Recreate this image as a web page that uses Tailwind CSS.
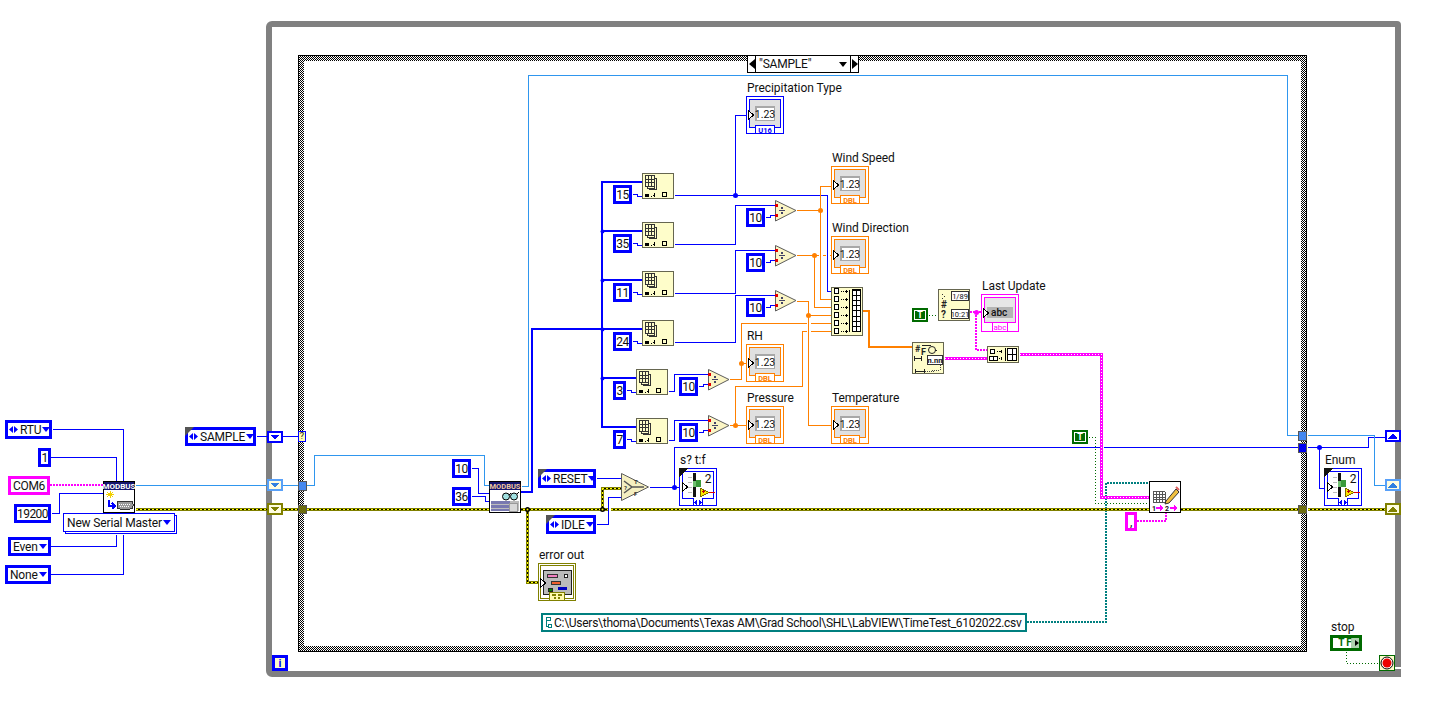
<!DOCTYPE html>
<html>
  <head>
    <meta charset="UTF-8" />
    <meta name="viewport" content="width=device-width, initial-scale=1.0" />
    <script src="https://cdn.jsdelivr.net/npm/@tailwindcss/browser@4"></script>
  </head>

  <body class="bg-white overflow-hidden font-['Roboto',sans-serif] text-[#111] text-[12px]">
    <div id="canvas" class="relative w-[1438px] h-[716px] overflow-hidden">
      <!-- while loop -->
      <div class="absolute left-[266px] top-[21px] w-[1135px] h-[656px] border-[6px] border-[#808080] rounded-tl-[6px] rounded-bl-[6px] rounded-tr-[4px] bg-white p-[28px_88px_19px_26px]">
        <!-- case structure -->
        <div class="w-full h-full border border-black bg-[repeating-conic-gradient(#000_0_25%,#fff_0_50%)] bg-[length:2px_2px] p-[5px]">
          <div class="w-full h-full bg-white"></div>
        </div>
      </div>
      <div class="absolute left-[1395px] top-[667px] w-[6px] h-[2px] bg-white"></div>

      <!-- case selector -->
      <div class="absolute left-[747px] top-[55px] w-[112px] h-[18px] border border-black bg-white flex items-center">
        <div class="w-[8px] h-full border-r border-black flex items-center justify-center">
          <div class="w-0 h-0 border-y-[5px] border-y-transparent border-r-[6px] border-r-black"></div>
        </div>
        <div class="flex-1 pl-[3px] leading-none text-[12px] tracking-[-0.2px]">"SAMPLE"</div>
        <div class="w-0 h-0 mr-[3px] border-x-[4px] border-x-transparent border-t-[5px] border-t-black"></div>
        <div class="w-[8px] h-full border-l border-black flex items-center justify-center">
          <div class="w-0 h-0 border-y-[5px] border-y-transparent border-l-[6px] border-l-black"></div>
        </div>
      </div>

      <svg id="wires" class="absolute inset-0" width="1438" height="716"></svg>
      <div id="nodes"></div>
    </div>

    <script>
      const BLUE = "#0000ff", LIGHT = "#2f96ee", ORANGE = "#ff8000", PINK = "#ff00ff", GREEN = "#006a00", TEAL = "#007f7f", OLIVE = "#808000";
      const PALE = "#fefdca";

      function wire(a, color, w, dash) {
        const off = w % 2 ? 0.5 : 0;
        const p = a.map((v) => v + off).join(" ");
        return `<polyline points="${p}" fill="none" stroke="${color}" stroke-width="${w}" ${dash ? `stroke-dasharray="${dash}"` : ""} shape-rendering="crispEdges"/>`;
      }
      const thin = (a) => wire(a, BLUE, 1);
      const light = (a) => wire(a, LIGHT, 1);
      const thick = (a) => wire(a, BLUE, 2);
      const org = (a) => wire(a, ORANGE, 1);
      const err = (a) =>
        wire(a, OLIVE, 3) + wire(a, "#000", 1) + wire(a, "#ffff00", 1, "2 2");
      const str = (a) => wire(a, PINK, 2, "2 1");
      const strArr = (a) => wire(a, PINK, 3) + wire(a, "#fff", 1, "1 2");
      const bool = (a) => wire(a, GREEN, 1, "1 2");
      const path = (a) => wire(a, TEAL, 2, "2 1");
      const dot = (x, y, c, r) => `<circle cx="${x + 0.5}" cy="${y + 0.5}" r="${r}" fill="${c}"/>`;

      let w = "";
      w += path([1027, 622, 1106, 622, 1106, 483, 1149, 483]);
      // left side constants
      [
        [52, 429, 123, 429, 123, 481],
        [50, 457, 116, 457, 116, 481],
        [51, 513, 59, 513, 59, 493, 103, 493],
        [50, 546, 116, 546, 116, 534],
        [50, 574, 123, 574, 123, 534],
        [256, 436, 267, 436],
        [282, 436, 298, 436],
        [1307, 447, 1368, 447, 1368, 437, 1385, 437],
        [674, 487, 674, 447, 1100, 447],
        [1103, 447, 1298, 447],
        [649, 487, 680, 487],
        [1319, 447, 1319, 488, 1327, 488],
        // index array outputs
        [674, 195, 827, 195, 827, 291, 831, 291],
        [735, 195, 735, 115, 747, 115],
        [674, 244, 735, 244, 735, 205, 775, 205],
        [674, 293, 735, 293, 735, 250, 775, 250],
        [674, 342, 735, 342, 735, 295, 775, 295],
        [668, 391, 674, 391, 674, 374, 708, 374],
        [668, 440, 674, 440, 674, 420, 708, 420],
        // index constants
        [632, 194, 637, 194, 637, 196, 642, 196],
        [632, 243, 637, 243, 637, 245, 642, 245],
        [632, 292, 637, 292, 637, 294, 642, 294],
        [632, 341, 637, 341, 637, 343, 642, 343],
        [626, 390, 631, 390, 631, 392, 636, 392],
        [626, 439, 631, 439, 631, 441, 636, 441],
        // divisors
        [765, 217, 770, 217, 770, 215, 775, 215],
        [765, 262, 770, 262, 770, 260, 775, 260],
        [765, 307, 770, 307, 770, 305, 775, 305],
        [698, 386, 703, 386, 703, 384, 708, 384],
        [698, 432, 703, 432, 703, 430, 708, 430],
        // modbus read
        [471, 468, 478, 468, 478, 493, 489, 493],
        [471, 496, 485, 496, 485, 501, 489, 501],
        [596, 478, 621, 478],
        [596, 524, 608, 524, 608, 497, 621, 497],
      ].forEach((a) => (w += thin(a)));
      [
        [135, 485, 267, 485],
        [282, 485, 299, 485],
        [306, 485, 314, 485, 314, 455, 484, 455, 484, 485, 489, 485],
        [521, 486, 528, 486, 528, 75, 1287, 75, 1287, 435, 1298, 435],
        [1307, 435, 1374, 435, 1374, 485, 1385, 485],
      ].forEach((a) => (w += light(a)));
      [
        [521, 492, 532, 492, 532, 329, 642, 329],
        [642, 182, 602, 182, 602, 427, 636, 427],
        [602, 231, 642, 231],
        [602, 280, 642, 280],
        [602, 378, 636, 378],
      ].forEach((a) => (w += thick(a)));
      [
        [796, 210, 820, 210],
        [833, 186, 820, 186, 820, 299, 831, 299],
        [796, 255, 818, 255],
        [822, 255, 825, 255],
        [829, 255, 833, 255],
        [814, 255, 814, 307, 831, 307],
        [796, 301, 808, 301, 808, 425, 833, 425],
        [808, 315, 831, 315],
        [729, 379, 741, 379, 741, 323, 806, 323],
        [810, 323, 831, 323],
        [741, 363, 747, 363],
        [729, 425, 747, 425],
        [735, 425, 735, 386, 802, 386, 802, 331, 806, 331],
        [810, 331, 831, 331],
      ].forEach((a) => (w += org(a)));
      w += wire([863, 311, 869, 311, 869, 347, 912, 347], ORANGE, 2);
      w += err([135, 509, 267, 509]) + err([282, 509, 298, 509]) + err([306, 509, 607, 509]) + err([610, 509, 1298, 509]) + err([1307, 509, 1385, 509]);
      w += err([527, 509, 527, 582, 540, 582]) + err([602, 509, 602, 488, 621, 488]);
      w += str([50, 485, 103, 485]) + str([970, 312, 982, 312]) + str([976, 312, 976, 350, 987, 350]) + str([1137, 521, 1166, 521, 1166, 513]);
      w += strArr([944, 358, 987, 358]) + strArr([1019, 354, 1101, 354, 1101, 497, 1149, 497]);
      w += bool([928, 315, 938, 315]) + bool([1088, 437, 1095, 437, 1095, 503, 1149, 503]) + bool([1346, 651, 1346, 663, 1379, 663]);
      [[602, 231], [602, 280], [602, 329], [602, 378], [735, 195], [674, 487], [1319, 447]].forEach((d) => (w += dot(d[0], d[1], BLUE, d[0] == 602 ? 2 : 2.5)));
      [[820, 210], [814, 255], [808, 315], [741, 363], [735, 425]].forEach((d) => (w += dot(d[0], d[1], ORANGE, 2.5)));
      w += dot(527, 509, "#000", 2.5) + dot(527, 509, "#ff0", 1) + dot(602, 509, "#000", 2.5) + dot(602, 509, "#ff0", 1) + dot(976, 312, PINK, 2.5);
      document.getElementById("wires").innerHTML = w;

      const place = (x, y, wd, h, cls, inner) =>
        `<div class="absolute ${cls}" style="left:${x}px;top:${y}px;width:${wd}px;height:${h}px">${inner || ""}</div>`;
      const svg = (wd, h, inner) =>
        `<svg class="block" width="${wd}" height="${h}" viewBox="0 0 ${wd} ${h}" shape-rendering="crispEdges">${inner}</svg>`;

      const num = (x, y, wd, txt) =>
        place(x, y, wd, 19, "border-[3px] border-[#0000ff] bg-white flex items-center justify-center text-[12px] tracking-[-0.5px] leading-none whitespace-nowrap", txt);
      const strConst = (x, y, wd, txt) =>
        place(x, y, wd, 19, "border-[3px] border-[#ff00ff] bg-white flex items-center justify-center text-[12px] tracking-[-0.3px] leading-none whitespace-nowrap", txt);
      const label = (x, y, txt) =>
        place(x, y - 8, 120, 16, "leading-[16px] text-[12px] tracking-[-0.05px] whitespace-nowrap", txt);

      const enumArrows = `<svg class="shrink-0" width="9" height="7" viewBox="0 0 9 7"><path d="M0 3.5 4 0v7zM9 3.5 5 0v7z" fill="#0000ff"/></svg>`;
      const enumDown = `<div class="w-0 h-0 shrink-0 border-x-[4px] border-x-transparent border-t-[5px] border-t-[#0000ff]"></div>`;
      const corner = `<div class="absolute -left-[3px] -top-[3px] w-0 h-0 border-r-[9px] border-r-transparent border-t-[9px] border-t-[#555]"></div>`;
      const enumC = (x, y, wd, txt, typed, noArrows) =>
        place(x, y, wd, 19, "border-[3px] border-[#0000ff] bg-white flex items-center pl-[1px] pr-[2px] gap-[1px] text-[12px] tracking-[-0.2px] leading-none whitespace-nowrap",
          (typed ? corner : "") + (noArrows ? "" : enumArrows) + `<span class="flex-1 pl-[1px]">${txt}</span>` + enumDown);

      // indicator terminal, 38x38
      function indicator(x, y, c, tag, tagColor) {
        return place(x, y, 38, 38, "", svg(38, 38,
          `<rect x="0.5" y="0.5" width="37" height="37" fill="#fff" stroke="${c}"/>
           <rect x="3.5" y="3.5" width="31" height="28" fill="#e0e0e0" stroke="${c}"/>
           <rect x="9" y="10" width="20" height="15" fill="#a8a8a8"/>
           <rect x="10.5" y="11.5" width="17" height="12" fill="#fff"/>
           <text x="19" y="21.5" text-anchor="middle" font-size="10.5" font-family="Roboto" fill="#111" shape-rendering="auto">1.23</text>
           <rect x="9.5" y="29.5" width="19" height="8" fill="#fff" stroke="${c}"/>
           <text x="19" y="36.5" text-anchor="middle" font-size="7.5" font-weight="700" font-family="Roboto" fill="${tagColor || c}" shape-rendering="auto">${tag}</text>
           <path d="M2.5 14.5v9l5-4.5z" fill="#fff" stroke="#000"/>`));
      }

      // index array node, 32x26
      function indexNode(x, y) {
        let grid = "";
        for (let i = 0; i <= 3; i++) grid += `<path d="M${3 + i * 3} 2.5v11M3 ${2.5 + i * 3.7}h9" stroke="#333" fill="none"/>`;
        return place(x, y, 32, 26, "", svg(32, 26,
          `<rect x="0.5" y="0.5" width="31" height="25" fill="${PALE}" stroke="#666650"/>
           <rect x="7.5" y="5.5" width="7" height="11" fill="${PALE}" stroke="#333"/>
           <rect x="5.5" y="4.5" width="7" height="11" fill="${PALE}" stroke="#333"/>
           <rect x="3.5" y="2.5" width="9" height="11" fill="${PALE}" stroke="#333"/>
           ${grid}
           <rect x="3" y="21" width="4" height="3" fill="#000"/>
           <path d="M9 23.5h1M11 22.5h2M12 20v4" stroke="#000"/>
           <rect x="20.5" y="19.5" width="4" height="4" fill="none" stroke="#000"/>`));
      }

      // divide node, 21x21
      function divide(x, y) {
        return place(x, y, 22, 22, "", svg(22, 22,
          `<path d="M0.5 0.5 21 10.5 0.5 21z" fill="#fbf5c4" stroke="#5c5c5c" shape-rendering="auto"/>
           <path d="M4 10.5h6" stroke="#446"/>
           <rect x="6" y="7" width="2" height="2" fill="#446"/>
           <rect x="6" y="12" width="2" height="2" fill="#446"/>
           <rect x="0" y="4" width="3" height="3" fill="#e00000"/>
           <rect x="0" y="14" width="3" height="3" fill="#e00000"/>`));
      }

      // structure terminals
      function srTerm(x, y, c, fill, tri, up) {
        const p = up ? "M3 8.5 7.5 3.5 12 8.5z" : "M3 3.5 7.5 8.5 12 3.5z";
        return place(x, y, 16, 12, "", svg(16, 12,
          `<rect x="1" y="1" width="14" height="10" fill="${fill}" stroke="${c}" stroke-width="2"/><path d="${p}" fill="${tri}" transform="translate(0.5 0)"/>`));
      }

      // enum case indicator, 38x38
      function enumInd(x, y) {
        return place(x, y, 38, 38, "", svg(38, 38,
          `<rect x="0.5" y="0.5" width="37" height="37" fill="#fff" stroke="#0000ff"/>
           <path d="M3.5 3.5h31v27h-11v7h-9v-7h-11z" fill="none" stroke="#0000ff"/>
           <rect x="14" y="5" width="3" height="24" fill="#111"/>
           <path d="M9 9h4M9 14h4M9 19h4M9 24h4" stroke="#bbb"/>
           <rect x="17" y="12" width="5" height="7" fill="#3a9a3a"/>
           <rect x="14" y="13" width="3" height="6" fill="#70c070"/>
           <path d="M0 0h9L0 9z" fill="#111"/>
           <path d="M3.5 14.5v9l5-4.5z" fill="#fff" stroke="#000"/>
           <text x="29" y="15" text-anchor="middle" font-size="12" font-family="Roboto" fill="#111" shape-rendering="auto">2</text>
           <path d="M21 20l9 4.5-9 4.5z" fill="#ffe800" stroke="#7a6a00"/>
           <path d="M30 24h6" stroke="#e00000"/>
           <path d="M23 23h3M24 22v3" stroke="#c00000"/>
           <path d="M14 34.5 18 32v5zM24 34.5 20 32v5z" fill="#0000ff"/>`));
      }

      function modbusNew(x, y) {
        return place(x, y, 32, 32, "", svg(32, 32,
          `<rect x="0.5" y="0.5" width="31" height="31" fill="#fff" stroke="#000"/>
           <rect x="1" y="1" width="30" height="8" fill="#14146e"/>
           <text x="16" y="8" text-anchor="middle" font-size="8" font-weight="700" font-family="Roboto" fill="#ffffff" shape-rendering="auto">MODBUS</text>
           <path d="M3 13h8M7 10v7M4 11l6 5M10 11l-6 5" stroke="#f2d000"/>
           <path d="M6 19v6h5M9 22l3 3-3 3" fill="none" stroke="#0000ff" stroke-width="2"/>
           <rect x="14" y="20" width="16" height="8" rx="3" fill="#9a9a9a" stroke="#333"/>
           <path d="M16 23h12M17 25h10" stroke="#fff" stroke-dasharray="1 1"/>`));
      }
      function modbusRead(x, y) {
        return place(x, y, 32, 32, "", svg(32, 32,
          `<rect x="0.5" y="0.5" width="31" height="31" fill="#fff" stroke="#000"/>
           <rect x="1" y="1" width="30" height="8" fill="#14146e"/>
           <text x="16" y="8" text-anchor="middle" font-size="7.5" font-weight="700" font-family="Roboto" fill="#f0c8a0" shape-rendering="auto">MODBUS</text>
           <circle cx="17" cy="15.5" r="3.5" fill="#a0e0e0" stroke="#000" shape-rendering="auto"/>
           <circle cx="25" cy="15.5" r="3.5" fill="#a0e0e0" stroke="#000" shape-rendering="auto"/>
           <path d="M20 14l2-2M28 13l2-2" stroke="#000"/>
           <rect x="2" y="20" width="28" height="10" fill="#bcbcbc"/>
           <rect x="2" y="20" width="19" height="3" fill="#7878b0"/>
           <rect x="2" y="24" width="19" height="3" fill="#7878b0"/>
           <rect x="2" y="28" width="19" height="2" fill="#7878b0"/>
           <rect x="20" y="22" width="8" height="8" fill="#d8d8d8" stroke="#999"/>`));
      }
      function selectNode(x, y) {
        return place(x, y, 28, 28, "", svg(28, 28,
          `<path d="M0.5 0.5 27.5 14 0.5 27.5z" fill="#f5efc0" stroke="#5c5c5c" shape-rendering="auto"/>
           <path d="M3 8l8 6-8 6M11 14h12" fill="none" stroke="#555" stroke-width="1.5" shape-rendering="auto"/>
           <text x="13" y="10.5" font-size="6" font-weight="700" font-family="Roboto" fill="#333" shape-rendering="auto">T</text>
           <text x="13" y="23" font-size="6" font-weight="700" font-family="Roboto" fill="#333" shape-rendering="auto">F</text>
           <text x="3" y="16.5" font-size="6" font-weight="700" font-family="Roboto" fill="#333" shape-rendering="auto">?</text>`));
      }
      function errorOut(x, y) {
        return place(x, y, 38, 38, "", svg(38, 38,
          `<rect x="0.5" y="0.5" width="37" height="37" fill="#fff" stroke="${OLIVE}"/>
           <rect x="2.5" y="2.5" width="33" height="33" fill="#fff" stroke="${OLIVE}"/>
           <rect x="5.5" y="7.5" width="28" height="24" fill="#bbb" stroke="#222"/>
           <rect x="9" y="11" width="10" height="3" fill="#f080c0" stroke="#333"/>
           <rect x="26.5" y="11.5" width="3" height="3" fill="#fff" stroke="#222"/>
           <rect x="13" y="18" width="9" height="3" fill="#f06030" stroke="#333"/>
           <rect x="20" y="24" width="9" height="3" fill="#0000c0"/>
           <rect x="10" y="25" width="4" height="3" fill="#008000" stroke="#222"/>
           <rect x="11.5" y="29.5" width="15" height="8" fill="#fff9b0" stroke="${OLIVE}"/>
           <path d="M14 32h4M20 32h4M16 35h2M20 35h2" stroke="${OLIVE}" stroke-width="2"/>
           <path d="M2.5 15.5v9l5-4.5z" fill="#fff" stroke="#000"/>`));
      }
      function builder(x, y) {
        let rows = "";
        for (let i = 0; i < 6; i++) {
          const ry = 4 + i * 8;
          rows += `<rect x="3.5" y="${ry - 2.5}" width="4" height="5" fill="#fff" stroke="#000"/><path d="M10 ${ry}h1M12 ${ry}h1M14 ${ry}h3M15.5 ${ry - 1}v3" stroke="#000"/>`;
        }
        let grid = "";
        for (let i = 0; i < 9; i++) grid += `<path d="M21 ${3 + i * 5.2}h8" stroke="#000"/>`;
        return place(x, y, 32, 49, "", svg(32, 49,
          `<rect x="0.5" y="0.5" width="31" height="48" fill="${PALE}" stroke="#666650"/>${rows}
           <path d="M18.5 3v42" stroke="#000"/><rect x="21.5" y="2.5" width="8" height="42" fill="#fff" stroke="#000"/>
           <path d="M25.5 3v41" stroke="#000"/>${grid}`));
      }
      function timeNode(x, y) {
        return place(x, y, 32, 32, "", svg(32, 32,
          `<rect x="0.5" y="0.5" width="31" height="31" fill="${PALE}" stroke="#666650"/>
           <rect x="13.5" y="2.5" width="17" height="9" fill="#fff" stroke="#333"/>
           <text x="22" y="10" text-anchor="middle" font-size="7.5" font-family="Roboto" fill="#111" shape-rendering="auto">1/89</text>
           <rect x="13.5" y="20.5" width="17" height="9" fill="#fff" stroke="#333"/>
           <text x="22" y="28" text-anchor="middle" font-size="7.5" font-family="Roboto" fill="#111" shape-rendering="auto">10:21</text>
           <path d="M4 5v1M6 7h1M4 9v1" stroke="#333"/>
           <text x="3" y="19" font-size="10" font-weight="700" font-family="Roboto" fill="#222" shape-rendering="auto">#</text>
           <text x="3" y="29" font-size="10" font-weight="700" font-family="Roboto" fill="#222" shape-rendering="auto">?</text>`));
      }
      function formatNode(x, y) {
        return place(x, y, 32, 32, "", svg(32, 32,
          `<rect x="0.5" y="0.5" width="31" height="31" fill="${PALE}" stroke="#666650"/>
           <text x="3" y="10" font-size="9" font-weight="700" font-family="Roboto" fill="#222" shape-rendering="auto">#</text>
           <text x="9" y="13" font-size="9" font-weight="700" font-family="Roboto" fill="#222" shape-rendering="auto">F</text>
           <path d="M10 3h9" stroke="#222"/>
           <circle cx="20" cy="8" r="3.5" fill="none" stroke="#222" shape-rendering="auto"/>
           <path d="M23 8l1 2 1-2z" fill="#222"/>
           <path d="M2 14v5M9 14v5M2 16.5h7M3 27v4M12 27v4M3 29h9" stroke="#222"/>
           <rect x="15.5" y="13.5" width="15" height="9" fill="#fff" stroke="#333"/>
           <text x="23" y="21" text-anchor="middle" font-size="7.5" font-weight="700" font-family="Roboto" fill="#111" shape-rendering="auto">n.nn</text>
           <path d="M13 29h9M28 23v5h-8" fill="none" stroke="#444" stroke-dasharray="1 1"/>`));
      }
      function buildArr(x, y) {
        return place(x, y, 32, 17, "", svg(32, 17,
          `<rect x="0.5" y="0.5" width="31" height="16" fill="${PALE}" stroke="#666650"/>
           <rect x="3.5" y="3.5" width="4" height="4" fill="#fff" stroke="#000"/>
           <rect x="2.5" y="10.5" width="8" height="4" fill="#fff" stroke="#000"/><path d="M6.5 11v3" stroke="#000"/>
           <path d="M10 5h1M12 5h1M13 5h2M14 4v3M12 12h1M14 12h1M14 11v3" stroke="#000"/>
           <path d="M18.5 2v13" stroke="#000"/>
           <rect x="20.5" y="2.5" width="9" height="12" fill="#fff" stroke="#000"/><path d="M25 3v11M20 8.5h9" stroke="#000"/>`));
      }
      function writeNode(x, y) {
        let grid = "";
        for (let i = 0; i <= 4; i++) grid += `<path d="M${4 + i * 3} 11v11M4 ${10.5 + i * 2.8}h12" stroke="#555"/>`;
        return place(x, y, 32, 32, "", svg(32, 32,
          `<rect x="0.5" y="0.5" width="31" height="31" fill="#fff" stroke="#000"/>${grid}
           <path d="M17 20 27 8l3 3-10 11-4 1z" fill="#f0c040" stroke="#333" shape-rendering="auto"/>
           <path d="M27 6l3 3" stroke="#e06060" stroke-width="2" shape-rendering="auto"/>
           <text x="3" y="30" font-size="7" font-weight="700" font-family="Roboto" fill="#111" shape-rendering="auto">1</text>
           <text x="16" y="30" font-size="7" font-weight="700" font-family="Roboto" fill="#111" shape-rendering="auto">2</text>
           <path d="M7 27h5M21 27h5" stroke="${PINK}" stroke-width="2"/><path d="M11 24v6l3-3zM25 24v6l3-3z" fill="${PINK}"/>`));
      }
      const boolT = (x, y) =>
        place(x, y, 16, 14, "bg-[#006a00] p-[2px]", `<div class="w-full h-full border border-white flex items-center justify-center text-white font-bold text-[9px] leading-none">T</div>`);

      let n = "";
      // left inputs
      n += enumC(5, 420, 47, "RTU");
      n += num(38, 448, 13, "1");
      n += strConst(8, 476, 42, "COM6");
      n += num(14, 504, 37, "19200");
      n += enumC(8, 537, 43, "Even", false, true);
      n += enumC(5, 565, 46, "None", false, true);
      n += modbusNew(103, 481);
      n += place(65, 515, 112, 19, "border border-[#0000ff] bg-white");
      n += place(63, 513, 112, 19, "border border-[#0000ff] bg-white flex items-center pl-[3px] pr-[3px] text-[12px] tracking-[-0.15px] leading-none whitespace-nowrap", `<span class="flex-1">New Serial Master</span>` + enumDown);
      n += enumC(185, 427, 71, "SAMPLE", true);

      // shift registers and tunnels
      n += srTerm(267, 431, "#0000ff", "#fff", "#0000ff");
      n += srTerm(267, 479, "#58a0f8", "#fffde0", "#3080e0");
      n += srTerm(267, 503, OLIVE, "#fffde0", OLIVE);
      n += srTerm(1385, 430, "#0000ff", "#fff", "#0000ff", true);
      n += srTerm(1385, 479, "#58a0f8", "#fffde0", "#3080e0", true);
      n += srTerm(1385, 503, OLIVE, "#fffde0", OLIVE, true);
      n += place(298, 431, 8, 11, "border border-[#0000ff] bg-[#fffdb0] flex items-center justify-center text-[9px] leading-none", "?");
      n += place(298, 481, 9, 10, "bg-[#4488f0] border border-[#555]");
      n += place(298, 505, 9, 9, "bg-[#6e6e10] border border-[#555]");
      n += place(1298, 431, 9, 10, "bg-[#4488f0] border border-[#555]");
      n += place(1298, 443, 9, 10, "bg-[#0000f0] border border-[#555]");
      n += place(1298, 505, 9, 9, "bg-[#6e6e10] border border-[#555]");

      // modbus read
      n += num(452, 459, 19, "10");
      n += num(452, 487, 19, "36");
      n += modbusRead(489, 481);

      // index + constants
      [[642, 173], [642, 222], [642, 271], [642, 320], [636, 369], [636, 418]].forEach((p) => (n += indexNode(p[0], p[1])));
      n += num(613, 185, 19, "15") + num(613, 234, 19, "35") + num(613, 283, 19, "11") + num(613, 332, 19, "24");
      n += num(613, 381, 13, "3") + num(613, 430, 13, "7");
      n += num(746, 208, 19, "10") + num(746, 253, 19, "10") + num(746, 298, 19, "10") + num(679, 377, 19, "10") + num(679, 423, 19, "10");
      [[775, 200], [775, 245], [775, 290], [708, 369], [708, 415]].forEach((p) => (n += divide(p[0], p[1])));

      // indicators
      n += label(747, 88, "Precipitation Type") + indicator(746, 96, BLUE, "U16");
      n += label(832, 158, "Wind Speed") + indicator(831, 166, ORANGE, "DBL");
      n += label(832, 228, "Wind Direction") + indicator(831, 236, ORANGE, "DBL");
      n += label(747, 336, "RH") + indicator(746, 344, ORANGE, "DBL");
      n += label(747, 398, "Pressure") + indicator(746, 406, ORANGE, "DBL");
      n += label(832, 398, "Temperature") + indicator(831, 406, ORANGE, "DBL");

      n += builder(831, 287);
      n += boolT(912, 308) + timeNode(938, 289) + formatNode(912, 342) + buildArr(987, 346);

      // Last Update string indicator
      n += label(982, 286, "Last Update");
      n += place(981, 294, 38, 38, "", svg(38, 38,
        `<rect x="0.5" y="0.5" width="37" height="37" fill="#fff" stroke="${PINK}"/>
         <rect x="3.5" y="3.5" width="31" height="25" fill="#e6e6e6" stroke="${PINK}"/>
         <rect x="6" y="13" width="26" height="11" fill="#b4b4b4"/>
         <text x="10" y="22" font-size="10" font-weight="500" font-family="Roboto" fill="#111" shape-rendering="auto">abc</text>
         <rect x="11.5" y="28.5" width="15" height="9" fill="#fff" stroke="${PINK}"/>
         <text x="19" y="36" text-anchor="middle" font-size="8" font-family="Roboto" fill="${PINK}" shape-rendering="auto">abc</text>
         <path d="M2.5 14.5v9l5-4.5z" fill="#fff" stroke="#000"/>`));

      // lower row
      n += enumC(538, 469, 58, "RESET", true);
      n += enumC(546, 515, 50, "IDLE", true);
      n += selectNode(621, 473);
      n += label(680, 460, "s? t:f") + enumInd(679, 468);
      n += label(539, 555, "error out") + errorOut(538, 563);
      n += place(541, 613, 486, 19, "border-[2px] border-[#007f7f] bg-white flex items-center pl-[2px] gap-[2px] text-[12px] tracking-[-0.27px] leading-none whitespace-nowrap overflow-hidden",
        `<svg class="shrink-0" width="7" height="12" viewBox="0 0 7 12" shape-rendering="crispEdges"><path d="M1.5 0.5h4v3h-4zM1.5 3.5v6h2M3.5 7.5h3v3h-3z" fill="none" stroke="#007f7f"/></svg><span>C:\\Users\\thoma\\Documents\\Texas AM\\Grad School\\SHL\\LabVIEW\\TimeTest_6102022.csv</span>`);
      n += boolT(1072, 430);
      n += writeNode(1149, 481);
      n += strConst(1125, 512, 12, ",");
      n += label(1325, 460, "Enum") + enumInd(1324, 468);

      // stop and iteration
      n += label(1331, 627, "stop");
      n += place(1330, 635, 32, 16, "border-[3px] border-[#006a00] bg-white flex items-center justify-center text-[#006a00] font-bold text-[10px] leading-none tracking-[2px]",
        `TF<div class="absolute right-0 top-0 bottom-0 w-[8px] bg-[#8fbf8f]/70"></div><div class="absolute right-0 top-[2px] w-0 h-0 border-y-[3px] border-y-transparent border-l-[4px] border-l-black"></div>`);
      n += place(1379, 655, 16, 16, "", svg(16, 16,
        `<rect x="0.5" y="0.5" width="15" height="15" fill="${PALE}" stroke="#006a00"/>
         <circle cx="8" cy="8" r="6" fill="#fff" stroke="#000" shape-rendering="auto"/>
         <circle cx="8" cy="8" r="4.5" fill="#ee0000" shape-rendering="auto"/>`));
      n += place(272, 655, 16, 16, "border-[3px] border-[#0000ff] bg-[#fffdc8] flex items-center justify-center text-[#0000ff] font-bold text-[11px] leading-none", "i");

      document.getElementById("nodes").innerHTML = n;
    </script>
  </body>
</html>
